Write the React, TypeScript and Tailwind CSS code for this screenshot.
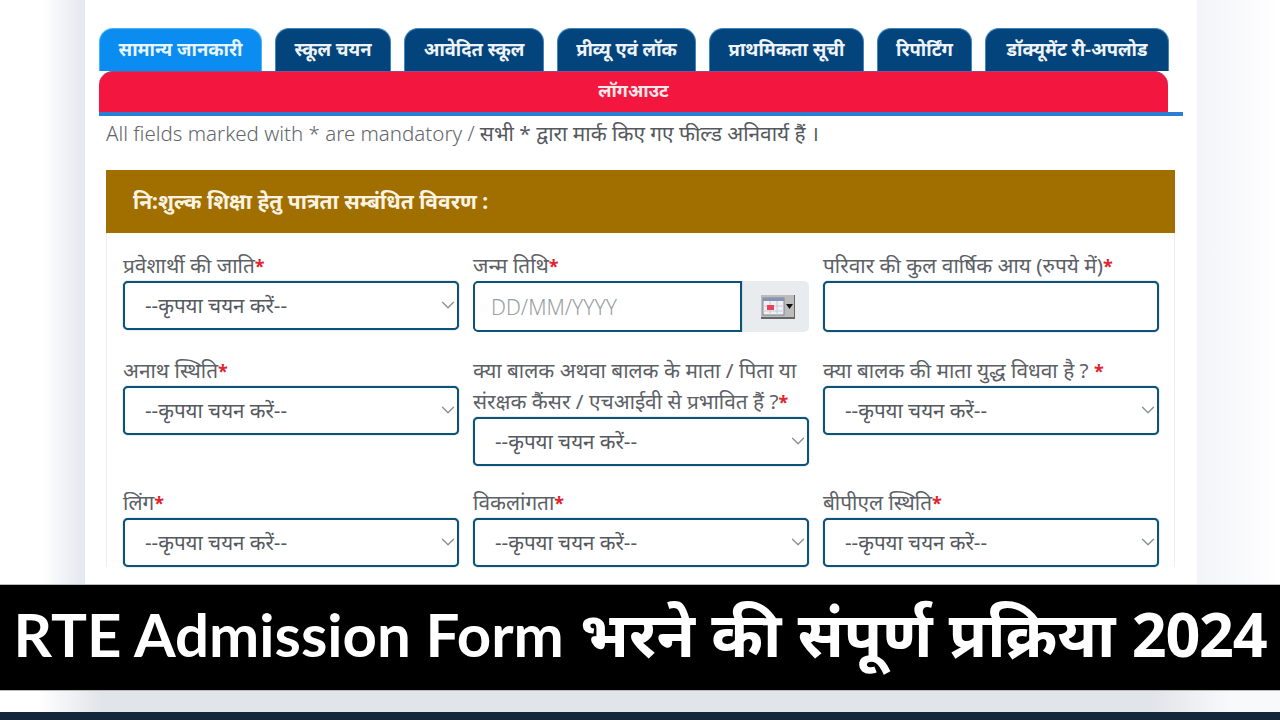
import React from 'react';
import { ChevronDown } from 'lucide-react';

const tabs = [
  { label: 'सामान्य जानकारी', width: 'w-[163px]', active: true },
  { label: 'स्कूल चयन', width: 'w-[116px]', active: false },
  { label: 'आवेदित स्कूल', width: 'w-[140px]', active: false },
  { label: 'प्रीव्यू एवं लॉक', width: 'w-[139px]', active: false },
  { label: 'प्राथमिकता सूची', width: 'w-[155px]', active: false },
  { label: 'रिपोर्टिंग', width: 'w-[95px]', active: false },
  { label: 'डॉक्यूमेंट री-अपलोड', width: 'w-[184px]', active: false },
];

function Label({ children }: { children: React.ReactNode }) {
  return (
    <label className="block whitespace-pre-line text-[20.8px] leading-[31px] text-[#5c6166]">
      {children}
      <span className="text-[18px] font-bold leading-none text-[#e0252f]">*</span>
    </label>
  );
}

function SelectBox() {
  return (
    <div className="relative">
      <select className="h-[49px] w-full appearance-none rounded-[5px] border-2 border-[#0d5278] bg-white pl-[20px] text-[20.5px] text-[#55595e] shadow-[0_0_1px_#0d5278] outline-none">
        <option>--कृपया चयन करें--</option>
      </select>
      <ChevronDown className="absolute right-0 top-[13px] h-[22px] w-[22px] text-[#8a9095]" strokeWidth={1.5} aria-hidden />
    </div>
  );
}

function CalendarIcon() {
  return (
    <svg width="34" height="24" viewBox="0 0 34 24" aria-hidden>
      <rect x="0" y="0" width="34" height="24" fill="#bcbcbc" />
      <rect x="0" y="22" width="34" height="2" fill="#666666" />
      <rect x="33" y="0" width="1" height="24" fill="#666666" />
      <rect x="2" y="3" width="21" height="17" fill="#eef0f4" stroke="#7d8696" strokeWidth="1" />
      <rect x="2" y="3" width="21" height="3" fill="#8296b4" />
      <path d="M9 6v14M16 6v14M2 11h21M2 16h21" stroke="#c6cad2" strokeWidth="1" />
      <rect x="6" y="10" width="7" height="5" fill="#ef3f55" />
      <path d="M25 9h7l-3.5 5z" fill="#111111" />
    </svg>
  );
}

export default function App() {
  return (
    <div className="h-[720px] w-[1280px] overflow-hidden bg-white font-['Noto_Sans','Noto_Sans_Devanagari',sans-serif]">
      <div className="flex h-[584px] overflow-hidden">
        <div className="h-full w-[85px] bg-gradient-to-r from-white via-white via-50% to-[#e4e7ee]" />
        <main className="h-[700px] w-[1112px] bg-white pl-[14px] pt-[28px]">
          <nav className="flex h-[43px] gap-[13px]">
            {tabs.map((t) => (
              <button
                key={t.label}
                type="button"
                className={`flex h-[43px] items-center justify-center whitespace-nowrap rounded-t-[14px] border border-b-0 pb-[2px] text-[18.4px] font-bold ${t.width} ${
                  t.active ? 'border-[#4fb4f5] bg-[#0a8cf0] text-[#e8f4ff]' : 'border-[#3f86b8] bg-[#04447c] text-[#eef3f8]'
                }`}
              >
                {t.label}
              </button>
            ))}
          </nav>
          <div className="w-[1084px] border-b-4 border-[#2a7fd5]">
            <button
              type="button"
              className="flex h-[41px] w-[1069px] justify-center rounded-t-[14px] border-t border-[#8a4f8f] bg-[#f3173f] pt-[5px] text-[18px] font-bold leading-[26px] text-[#fde8ec]"
            >
              लॉगआउट
            </button>
          </div>
          <p className="mt-[4px] h-[26px] whitespace-nowrap pl-[7px] text-[20.5px] font-light leading-[26px] text-[#62676b]">
            All fields marked with * are mandatory / <span className="text-[20.8px] font-normal leading-none text-[#55595d]">सभी * द्वारा मार्क किए गए फील्ड अनिवार्य हैं ।</span>
          </p>
          <section className="ml-[7px] mt-[24px] w-[1069px] border-x border-[#eceef0]">
            <h2 className="-mx-px flex h-[63px] items-center bg-[#a06f00] pl-[27px] text-[21px] font-bold text-[#fbf3e2]">
              नि:शुल्क शिक्षा हेतु पात्रता सम्बंधित विवरण :
            </h2>
            <div className="grid grid-cols-[336px_336px_336px] gap-x-[14px] px-[16px] pt-[17px]">
              <div className="mb-[23px]">
                <Label>प्रवेशार्थी की जाति</Label>
                <SelectBox />
              </div>
              <div className="mb-[23px]">
                <Label>जन्म तिथि</Label>
                <div className="flex h-[51px] overflow-hidden rounded-[5px] bg-[#e9ecef]">
                  <input
                    readOnly
                    placeholder="DD/MM/YYYY"
                    className="h-full w-[269px] rounded-l-[5px] border-2 border-[#0d5278] bg-white pl-[16px] text-[21px] font-light text-[#8b9096] shadow-[0_0_1px_#0d5278] outline-none placeholder:text-[#9a9ea3]"
                  />
                  <div className="flex flex-1 items-center justify-center pl-[4px]">
                    <CalendarIcon />
                  </div>
                </div>
              </div>
              <div className="mb-[23px]">
                <Label>परिवार की कुल वार्षिक आय (रुपये में)</Label>
                <input className="block h-[51px] w-full rounded-[5px] border-2 border-[#0d5278] bg-white shadow-[0_0_1px_#0d5278] outline-none" />
              </div>

              <div className="mb-[21px]">
                <Label>अनाथ स्थिति</Label>
                <SelectBox />
              </div>
              <div className="mb-[21px]">
                <Label>{'क्या बालक अथवा बालक के माता / पिता या\nसंरक्षक कैंसर / एचआईवी से प्रभावित हैं ?'}</Label>
                <SelectBox />
              </div>
              <div className="mb-[21px]">
                <Label>क्या बालक की माता युद्ध विधवा है ? </Label>
                <SelectBox />
              </div>

              <div>
                <Label>लिंग</Label>
                <SelectBox />
              </div>
              <div>
                <Label>विकलांगता</Label>
                <SelectBox />
              </div>
              <div>
                <Label>बीपीएल स्थिति</Label>
                <SelectBox />
              </div>
            </div>
          </section>
        </main>
        <div className="h-full flex-1 bg-gradient-to-r from-[#f3f4f9] to-white" />
      </div>
      <div className="flex h-[107px] items-center justify-center whitespace-nowrap border-y border-[#b9bcbf] bg-black pb-[8px] text-[62.5px] font-bold leading-none text-white">
        <span>
          <span className="font-['Lato',sans-serif] text-[60px]">RTE Admission Form</span> भरने की संपूर्ण प्रक्रिया <span className="text-[61px] tracking-[-1.2px]">2024</span>
        </span>
      </div>
      <div className="h-[21px] bg-[linear-gradient(to_right,#ffffff_3%,#e1e4e9_8%,#e1e4e9_90%,#f8f9fb_96%)]" />
      <div className="h-[8px] bg-[#13263a]" />
    </div>
  );
}
